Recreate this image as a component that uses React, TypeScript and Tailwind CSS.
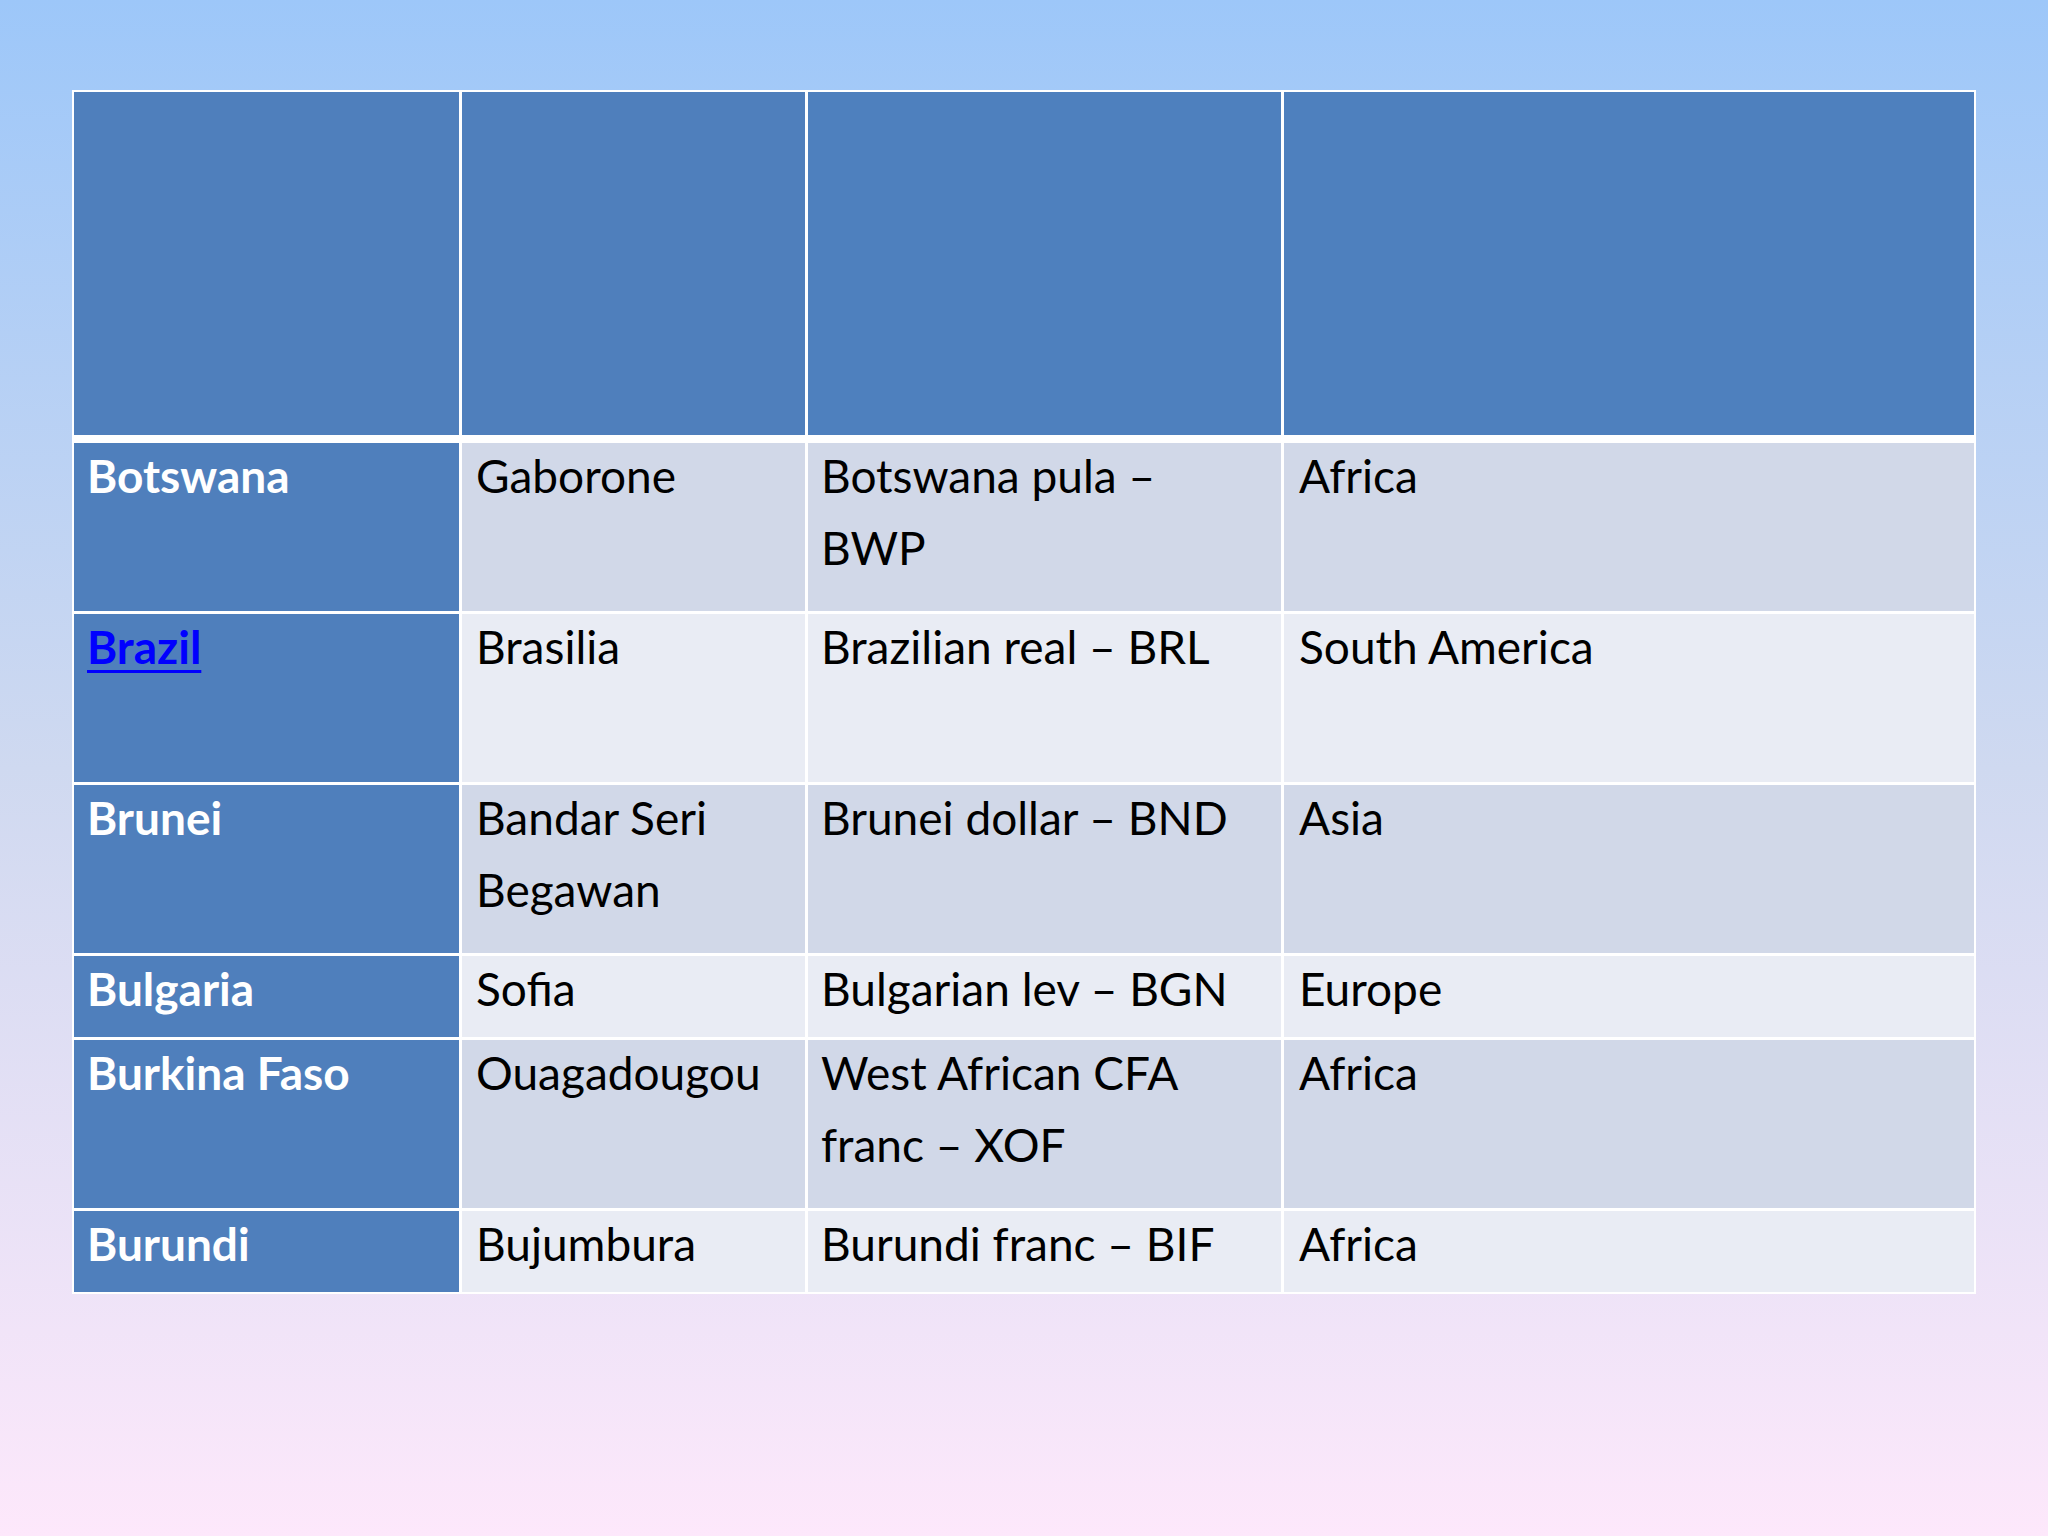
type Row = {
  country: string;
  link?: boolean;
  capital: string[];
  currency: string[];
  region: string;
  tall: boolean;
  band: 'dark' | 'light';
};

const rows: Row[] = [
  { country: 'Botswana', capital: ['Gaborone'], currency: ['Botswana pula –', 'BWP'], region: 'Africa', tall: true, band: 'dark' },
  { country: 'Brazil', link: true, capital: ['Brasilia'], currency: ['Brazilian real – BRL'], region: 'South America', tall: true, band: 'light' },
  { country: 'Brunei', capital: ['Bandar Seri', 'Begawan'], currency: ['Brunei dollar – BND'], region: 'Asia', tall: true, band: 'dark' },
  { country: 'Bulgaria', capital: ['Sofia'], currency: ['Bulgarian lev – BGN'], region: 'Europe', tall: false, band: 'light' },
  { country: 'Burkina Faso', capital: ['Ouagadougou'], currency: ['West African CFA', 'franc – XOF'], region: 'Africa', tall: true, band: 'dark' },
  { country: 'Burundi', capital: ['Bujumbura'], currency: ['Burundi franc – BIF'], region: 'Africa', tall: false, band: 'light' },
];

const cols = 'grid grid-cols-[385px_343px_473px_690px] gap-x-[3px]';

const Lines = ({ lines }: { lines: string[] }) => (
  <div className="-mt-[3px]">
    {lines.map((l) => (
      <div key={l} className="whitespace-nowrap">
        {l}
      </div>
    ))}
  </div>
);

export default function App() {
  return (
    <div
      className="w-[2048px] h-[1536px] overflow-hidden bg-gradient-to-b from-[#9dc7f9] via-[#cfd9f0] to-[#fde8fb] pt-[90px] pl-[72px]"
      style={{ fontFamily: 'Lato, "Open Sans", sans-serif' }}
    >
      <div className="w-[1904px] bg-white p-[2px] flex flex-col text-[46px] leading-[72px]">
        <div className={`${cols} h-[343px]`}>
          <div className="bg-[#4f7fbc]" />
          <div className="bg-[#4f7fbc]" />
          <div className="bg-[#4e80be]" />
          <div className="bg-[#4e80be]" />
        </div>
        <div className="h-[8px]" />
        <div className="flex flex-col gap-y-[3px]">
          {rows.map((r) => {
            const bg = r.band === 'dark' ? 'bg-[#d1d8e8]' : 'bg-[#e9ecf4]';
            return (
              <div key={r.country} className={`${cols} ${r.tall ? 'h-[168px]' : 'h-[81px]'}`}>
                <div className="bg-[#4f7fbc] pl-[13px] font-bold text-white">
                  <div className="-mt-[3px]">
                    {r.link ? (
                      <a href="#" className="text-[#0000ff] underline underline-offset-[6px] decoration-[3px]">
                        {r.country}
                      </a>
                    ) : (
                      r.country
                    )}
                  </div>
                </div>
                <div className={`${bg} pl-[14px] text-black`}>
                  <Lines lines={r.capital} />
                </div>
                <div className={`${bg} pl-[13px] text-black`}>
                  <Lines lines={r.currency} />
                </div>
                <div className={`${bg} pl-[15px] text-black`}>
                  <Lines lines={[r.region]} />
                </div>
              </div>
            );
          })}
        </div>
      </div>
    </div>
  );
}
